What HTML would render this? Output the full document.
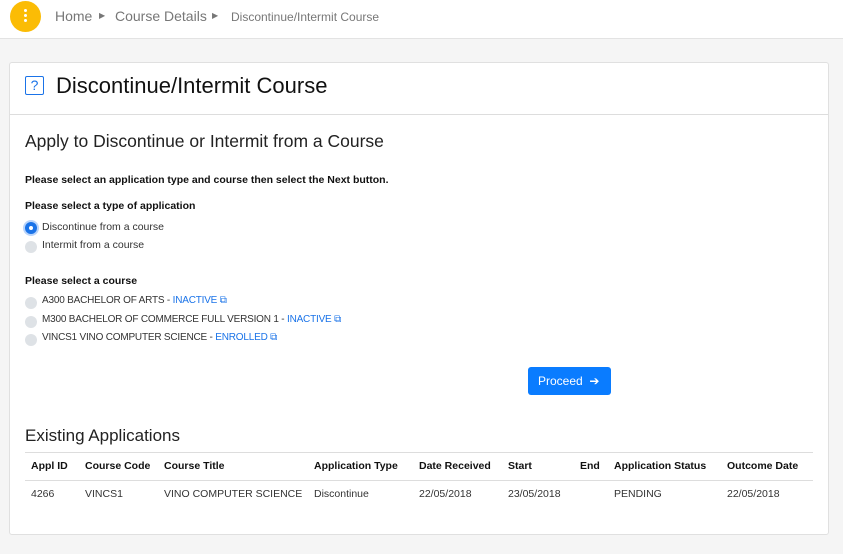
<!DOCTYPE html>
<html><head><style>
*{margin:0;padding:0;box-sizing:border-box}
body{width:843px;height:554px;background:#f5f5f5;font-family:"Liberation Sans",sans-serif;color:#212529;position:relative;overflow:hidden}
.a{position:absolute;white-space:nowrap}
.top{position:absolute;left:0;top:0;width:843px;height:39px;background:#fff;border-bottom:1px solid #e3e3e3}
.card{position:absolute;left:9px;top:62px;width:820px;height:473px;background:#fff;border:1px solid #e0e0e0;border-radius:3px}
.hdr{position:absolute;left:0;top:0;width:818px;height:52px;border-bottom:1px solid #ddd}
.s{font-size:10.5px;color:#333}
.c{font-size:10px;color:#333;letter-spacing:-0.2px}
.b{font-size:10.5px;font-weight:bold;color:#111}
.r{position:absolute;width:12px;height:12px;border-radius:50%;background:#dee2e6}
.lk{color:#1a73e8}
.th{font-size:10.5px;font-weight:bold;color:#111;position:absolute;top:460px}
.td{font-size:10.5px;color:#333;position:absolute;top:488px}
</style></head><body>
<div class="top"></div>
<div class="a" style="left:10px;top:1px;width:31px;height:31px;border-radius:50%;background:#fbbc05"></div>
<div class="a" style="left:24px;top:9px;width:3px;height:3px;background:#fff;border-radius:50%"></div>
<div class="a" style="left:24px;top:14px;width:3px;height:3px;background:#fff;border-radius:50%"></div>
<div class="a" style="left:24px;top:19px;width:3px;height:3px;background:#fff;border-radius:50%"></div>
<div class="a" style="left:55px;top:8px;font-size:14px;color:#777">Home</div>
<div class="a" style="left:99px;top:11px;font-size:8px;color:#777">▶</div>
<div class="a" style="left:115px;top:8px;font-size:14px;color:#777">Course Details</div>
<div class="a" style="left:212px;top:11px;font-size:8px;color:#777">▶</div>
<div class="a" style="left:231px;top:10px;font-size:12px;color:#777">Discontinue/Intermit Course</div>

<div class="card"><div class="hdr"></div></div>
<div class="a" style="left:25px;top:76px;width:19px;height:19px;border:1.5px solid #1a73e8;border-radius:2px;color:#1a73e8;font-size:14px;text-align:center;line-height:16px">?</div>
<div class="a" style="left:56px;top:73px;font-size:22px;color:#111">Discontinue/Intermit Course</div>
<div class="a" style="left:25px;top:131px;font-size:17.5px;color:#222">Apply to Discontinue or Intermit from a Course</div>
<div class="a b" style="left:25px;top:174px">Please select an application type and course then select the Next button.</div>
<div class="a b" style="left:25px;top:200px">Please select a type of application</div>
<div class="r" style="left:25px;top:222px;background:#1a73e8;box-shadow:0 0 0 2px #b9d4fb"></div>
<div class="a" style="left:29px;top:226px;width:4px;height:4px;border-radius:50%;background:#fff"></div>
<div class="a s" style="left:42px;top:221px">Discontinue from a course</div>
<div class="r" style="left:25px;top:241px"></div>
<div class="a s" style="left:42px;top:239px">Intermit from a course</div>
<div class="a b" style="left:25px;top:275px">Please select a course</div>
<div class="r" style="left:25px;top:297px"></div>
<div class="a c" style="left:42px;top:295px">A300 BACHELOR OF ARTS - <span class="lk">INACTIVE ⧉</span></div>
<div class="r" style="left:25px;top:316px"></div>
<div class="a c" style="left:42px;top:314px">M300 BACHELOR OF COMMERCE FULL VERSION 1 - <span class="lk">INACTIVE ⧉</span></div>
<div class="r" style="left:25px;top:334px"></div>
<div class="a c" style="left:42px;top:332px">VINCS1 VINO COMPUTER SCIENCE - <span class="lk">ENROLLED ⧉</span></div>
<div class="a" style="left:528px;top:367px;width:83px;height:28px;background:#0a7cff;border-radius:3px;color:#fff;font-size:12px;line-height:28px;padding-left:10px">Proceed&nbsp; ➔</div>
<div class="a" style="left:25px;top:426px;font-size:17px;color:#222">Existing Applications</div>
<div class="a" style="left:25px;top:452px;width:788px;height:1px;background:#ddd"></div>
<div class="a" style="left:25px;top:480px;width:788px;height:1px;background:#ddd"></div>
<div class="th" style="left:31px">Appl ID</div><div class="th" style="left:85px">Course Code</div><div class="th" style="left:164px">Course Title</div><div class="th" style="left:314px">Application Type</div><div class="th" style="left:419px">Date Received</div><div class="th" style="left:508px">Start</div><div class="th" style="left:580px">End</div><div class="th" style="left:614px">Application Status</div><div class="th" style="left:727px">Outcome Date</div>
<div class="td" style="left:31px">4266</div><div class="td" style="left:85px">VINCS1</div><div class="td" style="left:164px">VINO COMPUTER SCIENCE</div><div class="td" style="left:314px">Discontinue</div><div class="td" style="left:419px">22/05/2018</div><div class="td" style="left:508px">23/05/2018</div><div class="td" style="left:614px">PENDING</div><div class="td" style="left:727px">22/05/2018</div>
</body></html>
